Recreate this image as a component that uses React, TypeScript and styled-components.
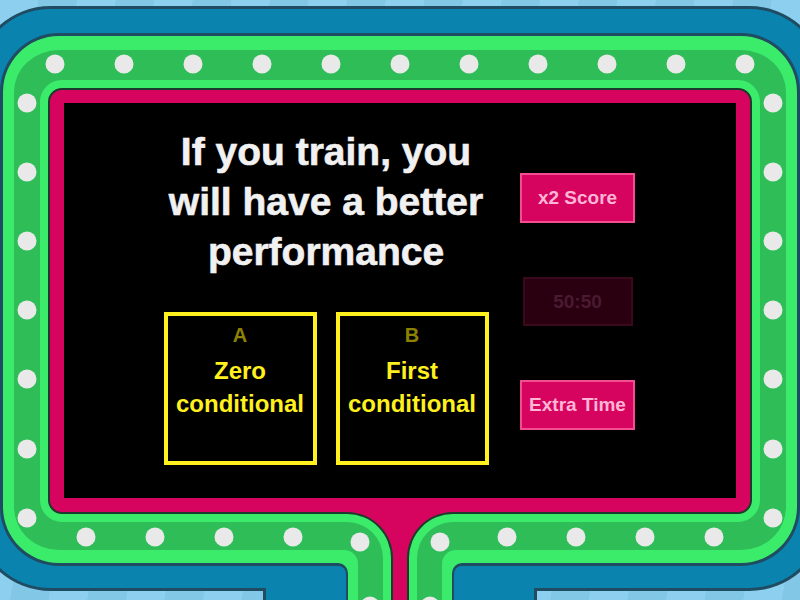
import React from 'react';
import styled, { createGlobalStyle } from 'styled-components';

const GlobalStyle = createGlobalStyle`
  html, body {
    margin: 0;
    padding: 0;
  }
  body {
    font-family: "Liberation Sans", Arial, sans-serif;
    background: #8ccfee;
    overflow: hidden;
  }
`;

const colors = {
  sky: '#8ccfee',
  skyDark: '#82c7e6',
  blue: '#0a83ae',
  outline: '#1f4c62',
  greenLight: '#3bec6b',
  greenDark: '#2fbd58',
  greenLine: '#1d3b2c',
  pink: '#d6035f',
  bulb: '#e9e9e9',
  yellow: '#fff01e',
};

const Stage = styled.div`
  position: relative;
  width: 800px;
  height: 600px;
  overflow: hidden;
  background: repeating-linear-gradient(
    100deg,
    ${colors.sky} 0 38px,
    ${colors.skyDark} 38px 76px
  );
`;

const OuterFrame = styled.div`
  box-sizing: border-box;
  width: 854px;
  margin: 6px 0 0 -27px;
  padding: 27px 27px 25px;
  background: ${colors.blue};
  border: 3px solid ${colors.outline};
  border-radius: 78px;
`;

const GreenRing = styled.div`
  background: ${colors.greenDark};
  border-style: solid;
  border-color: ${colors.greenLight};
  border-width: 14px 11px 13px;
  padding: 30px 26px 28px;
  border-radius: 56px;
  box-shadow: 0 0 0 3px ${colors.outline};
`;

const InnerBand = styled.div`
  background: ${colors.greenLine};
  border: 8px solid ${colors.greenLight};
  padding: 2px;
  border-radius: 22px;
`;

const PinkBorder = styled.div`
  border: 14px solid ${colors.pink};
  border-top-width: 13px;
  border-radius: 12px;
  background: #000;
`;

const Screen = styled.div`
  height: 395px;
  display: flex;
  gap: 8px;
  padding-left: 76px;
`;

const QuestionColumn = styled.div`
  width: 372px;
  display: flex;
  flex-direction: column;
  align-items: center;
  padding-top: 24px;
`;

const Question = styled.div`
  max-width: 335px;
  color: #f1f1f1;
  font-size: 39px;
  line-height: 50px;
  font-weight: 700;
  text-align: center;
  -webkit-text-stroke: 0.6px #f1f1f1;
`;

const Answers = styled.div`
  display: flex;
  gap: 19px;
  margin-top: 35px;
`;

const AnswerBox = styled.div`
  box-sizing: border-box;
  width: 153px;
  height: 153px;
  border: 4px solid ${colors.yellow};
  display: flex;
  flex-direction: column;
  align-items: center;
  padding-top: 8px;
`;

const AnswerLetter = styled.div`
  color: #8c8200;
  font-size: 20px;
  line-height: 22px;
  font-weight: 700;
`;

const AnswerText = styled.div`
  margin-top: 8px;
  color: ${colors.yellow};
  font-size: 24px;
  line-height: 33px;
  font-weight: 700;
  text-align: center;
`;

const PowerUps = styled.div`
  width: 115px;
  display: flex;
  flex-direction: column;
  align-items: center;
  gap: 54px;
  padding-top: 70px;
`;

const PowerUp = styled.div<{ $disabled?: boolean }>`
  box-sizing: border-box;
  width: ${({ $disabled }) => ($disabled ? '110px' : '115px')};
  height: ${({ $disabled }) => ($disabled ? '49px' : '50px')};
  display: flex;
  align-items: center;
  justify-content: center;
  background: ${({ $disabled }) => ($disabled ? '#2a0011' : colors.pink)};
  border: 2px solid ${({ $disabled }) => ($disabled ? '#3a0a1c' : '#f24e92')};
  color: ${({ $disabled }) => ($disabled ? '#4a1a30' : '#ffb5d6')};
  font-size: 19px;
  font-weight: 700;
`;

const Stem = styled.div`
  position: absolute;
  left: 263px;
  top: 498px;
  width: 274px;
  height: 110px;
  display: flex;
  gap: 14px;
  background: ${colors.pink};
`;

const Leg = styled.div<{ $flip?: boolean }>`
  flex: 1;
  display: flex;
  margin-top: 14px;
  transform: ${({ $flip }) => ($flip ? 'scaleX(-1)' : 'none')};
`;

const LegLayer = styled.div<{ $bg: string; $top: number; $side: number; $radius: number }>`
  flex: 1;
  display: flex;
  background: ${({ $bg }) => $bg};
  padding-top: ${({ $top }) => $top}px;
  padding-right: ${({ $side }) => $side}px;
  border-top-right-radius: ${({ $radius }) => $radius}px;
`;

const LegBlue = styled.div`
  flex: 1;
  border-top-right-radius: 8px;
  background: linear-gradient(${colors.outline}, ${colors.outline}) 0 22px / 3px 100% no-repeat,
    ${colors.blue};
`;

const Bulbs = styled.svg`
  position: absolute;
  left: 0;
  top: 0;
  pointer-events: none;
`;

const topRow = [55, 124, 193, 262, 331, 400, 469, 538, 607, 676, 745];
const sideRows = [103, 172, 241, 310, 379, 449, 518];
const bottomRow = [86, 155, 224, 293, 507, 576, 645, 714];

const bulbs: [number, number][] = [
  ...topRow.map((x) => [x, 64] as [number, number]),
  ...sideRows.map((y) => [27, y] as [number, number]),
  ...sideRows.map((y) => [773, y] as [number, number]),
  ...bottomRow.map((x) => [x, 537] as [number, number]),
  [360, 542],
  [440, 542],
  [370, 606],
  [430, 606],
];

const StandLeg: React.FC<{ flip?: boolean }> = ({ flip }) => (
  <Leg $flip={flip}>
    <LegLayer $bg={colors.greenLine} $top={2} $side={2} $radius={46}>
      <LegLayer $bg={colors.greenLight} $top={8} $side={8} $radius={44}>
        <LegLayer $bg={colors.greenDark} $top={28} $side={25} $radius={36}>
          <LegLayer $bg={colors.greenLight} $top={13} $side={10} $radius={14}>
            <LegLayer $bg={colors.outline} $top={3} $side={2} $radius={10}>
              <LegBlue />
            </LegLayer>
          </LegLayer>
        </LegLayer>
      </LegLayer>
    </LegLayer>
  </Leg>
);

const App: React.FC = () => {
  return (
    <>
      <GlobalStyle />
      <Stage>
        <OuterFrame>
          <GreenRing>
            <InnerBand>
              <PinkBorder>
                <Screen>
                  <QuestionColumn>
                    <Question>If you train, you will have a better performance</Question>
                    <Answers>
                      <AnswerBox>
                        <AnswerLetter>A</AnswerLetter>
                        <AnswerText>
                          Zero
                          <br />
                          conditional
                        </AnswerText>
                      </AnswerBox>
                      <AnswerBox>
                        <AnswerLetter>B</AnswerLetter>
                        <AnswerText>
                          First
                          <br />
                          conditional
                        </AnswerText>
                      </AnswerBox>
                    </Answers>
                  </QuestionColumn>
                  <PowerUps>
                    <PowerUp>x2 Score</PowerUp>
                    <PowerUp $disabled>50:50</PowerUp>
                    <PowerUp>Extra Time</PowerUp>
                  </PowerUps>
                </Screen>
              </PinkBorder>
            </InnerBand>
          </GreenRing>
        </OuterFrame>
        <Stem>
          <StandLeg />
          <StandLeg flip />
        </Stem>
        <Bulbs width={800} height={600} viewBox="0 0 800 600">
          {bulbs.map(([x, y], i) => (
            <circle key={i} cx={x} cy={y} r={9.5} fill={colors.bulb} />
          ))}
        </Bulbs>
      </Stage>
    </>
  );
};

export default App;
